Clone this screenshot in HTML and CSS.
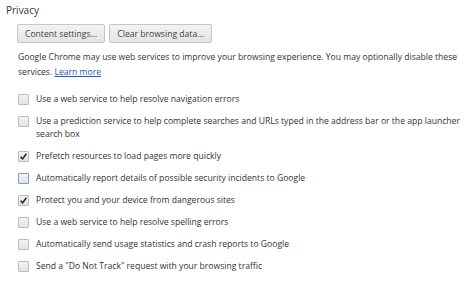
FILE: index.html
```html
<!DOCTYPE html>
<html>
<head>
<meta charset="utf-8">
<link rel="stylesheet" href="styles.css">
</head>
<body>
<section class="section">
  <h3 class="title">Privacy</h3>
  <div class="content">
    <div class="buttons">
      <button class="btn">Content settings...</button>
      <button class="btn">Clear browsing data...</button>
    </div>
    <p class="desc">Google Chrome may use web services to improve your browsing experience. You may optionally disable these services. <a href="#" class="link">Learn more</a></p>
    <ul class="list">
      <li class="row"><span class="box"></span><span class="label">Use a web service to help resolve navigation errors</span></li>
      <li class="row"><span class="box"></span><span class="label">Use a prediction service to help complete searches and URLs typed in the address bar or the app launcher search box</span></li>
      <li class="row"><span class="box checked"><svg viewBox="0 0 10 10" width="10" height="10"><path d="M1.8 5.2 L4 7.6 L8.2 2" fill="none" stroke="#222" stroke-width="1.7"/></svg></span><span class="label">Prefetch resources to load pages more quickly</span></li>
      <li class="row"><span class="box focus"></span><span class="label">Automatically report details of possible security incidents to Google</span></li>
      <li class="row"><span class="box checked"><svg viewBox="0 0 10 10" width="10" height="10"><path d="M1.8 5.2 L4 7.6 L8.2 2" fill="none" stroke="#222" stroke-width="1.7"/></svg></span><span class="label">Protect you and your device from dangerous sites</span></li>
      <li class="row"><span class="box"></span><span class="label">Use a web service to help resolve spelling errors</span></li>
      <li class="row"><span class="box"></span><span class="label">Automatically send usage statistics and crash reports to Google</span></li>
      <li class="row"><span class="box"></span><span class="label">Send a "Do Not Track" request with your browsing traffic</span></li>
    </ul>
  </div>
</section>
</body>
</html>
```
FILE: styles.css
```css
html, body {
  margin: 0;
  padding: 0;
  background: #fff;
}
body {
  font-family: "Open Sans", "Noto Sans", sans-serif;
  font-size: 8.6px;
  color: #333;
}
.section {
  padding: 2px 0 0 6px;
}
.title {
  margin: 0;
  font-size: 10px;
  font-weight: normal;
  color: #333;
  line-height: 16px;
}
.content {
  padding-left: 11px;
}
.buttons {
  display: flex;
  gap: 4px;
  margin-top: 6px;
}
.btn {
  font-family: inherit;
  font-size: 8.6px;
  color: #444;
  height: 19px;
  padding: 0 7px;
  border: 1px solid #c6c6c6;
  border-radius: 2px;
  background: linear-gradient(#f3f3f3, #e4e4e4);
}
.desc {
  margin: 7px 0 0 1px;
  line-height: 15px;
  padding-right: 12px;
}
.link {
  color: #2356b8;
}
.list {
  list-style: none;
  margin: 13px 0 0 1px;
  padding: 0;
}
.row {
  display: flex;
  align-items: flex-start;
  gap: 7px;
  margin-bottom: 9px;
  line-height: 13px;
}
.box {
  flex: none;
  box-sizing: border-box;
  width: 11px;
  height: 11px;
  margin-top: 1px;
  border: 1px solid #bcbcbc;
  border-radius: 1px;
  background: linear-gradient(#f3f3f3, #e2e2e2);
  display: flex;
  align-items: center;
  justify-content: center;
}
.box svg { width: 9px; height: 9px; }
.box.focus {
  border-color: #8598c8;
  background: linear-gradient(#f2f4fb, #dfe5f3);
}
.label {
  padding-right: 6px;
}
```
